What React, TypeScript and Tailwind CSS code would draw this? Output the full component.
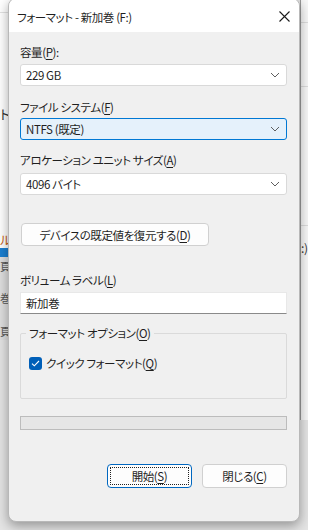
import React from "react";

const U = ({ c }: { c: string }) => <span className="underline underline-offset-2">{c}</span>;

const Chevron = () => (
  <svg width="10" height="6" viewBox="0 0 10 6" className="shrink-0">
    <path d="M1 1 L5 5 L9 1" fill="none" stroke="#5f5f5f" strokeWidth="1" />
  </svg>
);

function Combo({ text, active }: { text: string; active?: boolean }) {
  return (
    <div
      className={
        "flex h-[22px] items-center justify-between rounded-[3px] border pl-[5px] pr-[6px] " +
        (active ? "border-[#0078d4] bg-[#e5f1fb]" : "border-[#d9d9d9] bg-white")
      }
    >
      <span className="leading-[16px]">{text}</span>
      <Chevron />
    </div>
  );
}

export default function App() {
  return (
    <div
      className="relative h-[530px] w-[308px] overflow-hidden bg-[#e4e4e4] text-[11.5px] tracking-[-0.4px] text-[#1f1f1f] [font-feature-settings:'palt']"
      style={{ fontFamily: '"Noto Sans CJK JP", "Noto Sans", sans-serif' }}
    >
      {/* background window fragments */}
      <div className="absolute left-0 top-0 h-[340px] w-[10px] bg-white">
        <div className="mt-[12px] h-px w-full bg-[#e2e2e2]" />
        <div className="absolute left-0 top-[106px] text-[13px] leading-[16px] text-[#333]">ト</div>
        <div className="absolute left-0 top-[232px] text-[12px] leading-[16px] text-[#c55a11]">ル</div>
        <div className="absolute left-0 top-[248px] h-[9px] w-full bg-[#1c7fd0]" />
        <div className="absolute left-0 top-[257px] h-[83px] w-full bg-[#dedede]" />
        <div className="absolute left-0 top-[258px] text-[11px] leading-[16px] text-[#555]">頁</div>
        <div className="absolute left-0 top-[290px] text-[11px] leading-[16px] text-[#555]">巻</div>
        <div className="absolute left-0 top-[323px] text-[11px] leading-[16px] text-[#555]">頁</div>
      </div>
      <div className="absolute right-0 top-0 h-[420px] w-[8px] border-l border-[#9a9a9a] bg-[#f7f7f7]">
        <div className="mt-[22px] h-px w-full bg-[#dcdcdc]" />
        <div className="mt-[63px] h-px w-full bg-[#dcdcdc]" />
        <div className="mt-[138px] h-px w-full bg-[#dcdcdc]" />
        <div className="absolute left-0 top-[240px] text-[12px] leading-[16px] text-[#333]">:)</div>
      </div>

      {/* dialog */}
      <div className="absolute left-[8px] top-[-2px] flex h-[524px] w-[292px] flex-col overflow-hidden rounded-[8px] border border-[#b8b8b8] bg-[#f0f0f0] shadow-[0_4px_12px_rgba(0,0,0,0.35)]">
        <div className="flex h-[33px] shrink-0 items-center justify-between bg-white pl-[8px] pr-[8px] pt-[2px]">
          <span className="leading-[16px]">フォーマット - 新加巻 (F:)</span>
          <svg width="11" height="11" viewBox="0 0 11 11" className="mr-[1px]">
            <path d="M0.5 0.5 L10.5 10.5 M10.5 0.5 L0.5 10.5" stroke="#1a1a1a" strokeWidth="1.1" />
          </svg>
        </div>

        <div className="flex flex-col pl-[11px] pr-[12px]">
          <div className="mt-[12px] leading-[16px]">
            容量(<U c="P" />):
          </div>
          <div className="mt-[4px]">
            <Combo text="229 GB" />
          </div>

          <div className="mt-[13px] leading-[16px]">
            ファイル システム(<U c="F" />)
          </div>
          <div className="mt-[3px]">
            <Combo text="NTFS (既定)" active />
          </div>

          <div className="mt-[12px] leading-[16px]">
            アロケーション ユニット サイズ(<U c="A" />)
          </div>
          <div className="mt-[5px]">
            <Combo text="4096 バイト" />
          </div>

          <div className="ml-[1px] mt-[28px] flex h-[23px] w-[188px] items-center justify-center rounded-[4px] border border-[#d0d0d0] bg-[#fdfdfd] leading-[16px]">
            デバイスの既定値を復元する(<U c="D" />)
          </div>

          <div className="mt-[26px] leading-[16px]">
            ボリューム ラベル(<U c="L" />)
          </div>
          <div className="mt-[4px] flex h-[22px] items-center border border-[#e8e8e8] border-b-[#8a8a8a] bg-white pl-[5px] leading-[16px]">
            新加巻
          </div>

          <div className="relative mt-[19px] h-[66px] rounded-[2px] border border-[#dadada]">
            <div className="absolute left-[5px] top-[-9px] bg-[#f0f0f0] px-[3px] leading-[16px]">
              フォーマット オプション(<U c="O" />)
            </div>
            <div className="ml-[8px] mt-[21px] flex items-center gap-[4px]">
              <div className="flex h-[13px] w-[13px] items-center justify-center rounded-[3px] bg-[#005fb8]">
                <svg width="9" height="7" viewBox="0 0 9 7">
                  <path d="M1 3.6 L3.3 5.8 L8 1" fill="none" stroke="white" strokeWidth="1.1" />
                </svg>
              </div>
              <span className="leading-[16px]">
                クイック フォーマット(<U c="Q" />)
              </span>
            </div>
          </div>

          <div className="mt-[17px] h-[14px] border border-[#bcbcbc] bg-[#e6e6e6]" />

          <div className="mt-[34px] flex justify-end gap-[10px]">
            <div className="flex h-[24px] w-[85px] items-center justify-center rounded-[4px] border border-[#0067c0] bg-[#fdfdfd] p-[2px]">
              <div className="flex h-full w-full items-center justify-center border border-dotted border-[#222] leading-[16px]">
                開始(<U c="S" />)
              </div>
            </div>
            <div className="flex h-[24px] w-[85px] items-center justify-center rounded-[4px] border border-[#d0d0d0] bg-[#fdfdfd] leading-[16px]">
              閉じる(<U c="C" />)
            </div>
          </div>
        </div>
      </div>
    </div>
  );
}
